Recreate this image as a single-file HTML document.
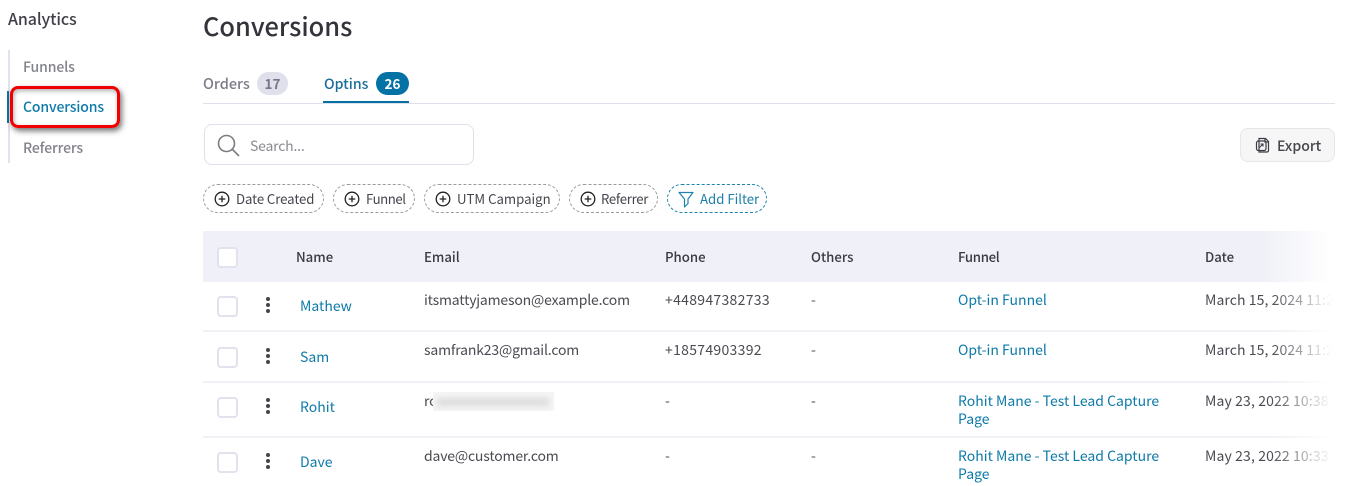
<!DOCTYPE html>
<html><head><meta charset="utf-8"><style>
html,body{margin:0;padding:0;background:#fff;width:1348px;height:486px;overflow:hidden}
body{position:relative;font-family:"Liberation Sans","Noto Sans CJK SC",sans-serif}
.t{position:absolute;white-space:nowrap;font-size:14px;line-height:20px;color:#4a4a52;font-family:"Noto Sans CJK SC","Liberation Sans",sans-serif}
.a{position:absolute}
.h{color:#3a3a42;font-size:13.2px;font-weight:500;top:247px}
.l{color:#0e7aa8}
.e{letter-spacing:-.17px}
.p{letter-spacing:.3px}
.c{font-size:13.2px;top:189px;color:#45454d}
.s{letter-spacing:-.12px;font-weight:500}
.cb{position:absolute;left:217px;width:17px;height:17px;border:2px solid #e2e2ee;border-radius:4px;background:#fff}
.sep{position:absolute;left:203px;width:1129px;height:2px;background:#f0f0f6}
.chip{position:absolute;top:184px;height:27px;border:1px dashed #9a9aa2;border-radius:15px;box-sizing:content-box}
.d{position:absolute;left:266px;width:4px;height:4px;border-radius:50%;background:#44444c}
</style></head><body>
<div class="t" style="left:8px;top:7px;font-size:16px;line-height:22px;color:#3f3f48;font-weight:500;letter-spacing:-.1px">Analytics</div>
<div class="a" style="left:8px;top:50px;width:2px;height:113px;background:#e2e2ee"></div>
<div class="a" style="left:7px;top:91px;width:2px;height:32px;background:#0e73a0"></div>
<div class="t s" style="left:23px;top:57px;color:#82828c">Funnels</div>
<div class="a" style="left:10px;top:86px;width:110px;height:42px;border:3.5px solid #f00000;border-radius:8px;box-shadow:2px 3px 6px rgba(0,0,0,.55),inset 1px 2px 5px rgba(0,0,0,.3);box-sizing:border-box"></div>
<div class="t s" style="left:23px;top:97px;color:#0e7aa8">Conversions</div>
<div class="t s" style="left:23px;top:138px;color:#82828c">Referrers</div>

<div class="t" style="left:203px;top:8px;font-size:25.4px;line-height:36px;color:#33333b;font-weight:500">Conversions</div>

<div class="t" style="left:203px;top:74px;font-size:14.5px;color:#7c7c88;font-weight:500">Orders</div>
<div class="a" style="left:257px;top:72px;width:31px;height:23px;border-radius:12px;background:#e0e0ec"></div>
<div class="t" style="left:257px;width:31px;text-align:center;top:73px;font-size:13.5px;color:#77778a;font-weight:700">17</div>
<div class="t" style="left:324px;top:74px;font-size:14.1px;color:#1a6f98;font-weight:500">Optins</div>
<div class="a" style="left:376px;top:72px;width:33px;height:23px;border-radius:12px;background:#0472a4"></div>
<div class="t" style="left:376px;width:33px;text-align:center;top:73px;font-size:13.5px;color:#fff;font-weight:700">26</div>
<div class="a" style="left:203px;top:103px;width:1132px;height:1px;background:#e0e0ea"></div>
<div class="a" style="left:323px;top:101px;width:86px;height:2px;background:#0472a4"></div>

<div class="a" style="left:204px;top:124px;width:270px;height:41px;box-sizing:border-box;border:1px solid #e0e0ec;border-radius:8px"></div>
<svg class="a" style="left:216px;top:133px" width="26" height="26" viewBox="0 0 26 26" fill="none" stroke="#7c7c84" stroke-width="1.6"><circle cx="10.5" cy="10.5" r="8"/><path d="M16.5 16.5L23 23"/></svg>
<div class="t" style="left:250px;top:136px;color:#8a8a92;letter-spacing:-.2px">Search...</div>

<div class="a" style="left:1240px;top:128px;width:95px;height:34px;box-sizing:border-box;border:1px solid #e6e6ea;border-radius:8px;background:#f6f6f6"></div>
<svg class="a" style="left:1254px;top:136px" width="18" height="18" viewBox="0 0 18 18" fill="none" stroke="#3c3c44" stroke-width="1.2"><path d="M5 2.5h6.5l3 3v9a1.5 1.5 0 0 1-1.5 1.5H5z"/><path d="M11 2.5v3.5h3.5"/><rect x="2.5" y="5" width="9.5" height="9.5" rx="2"/><path d="M5.5 11.5L9 8M6.5 8H9v2.5" stroke-width="1.1"/></svg>
<div class="t" style="left:1277px;top:136px;font-size:14.1px;color:#45454d;font-weight:500">Export</div>

<div class="chip" style="left:203px;width:119px"></div>
<div class="chip" style="left:333px;width:80px"></div>
<div class="chip" style="left:424px;width:134px"></div>
<div class="chip" style="left:569px;width:87px"></div>
<div class="chip" style="left:667px;width:98px;border-color:#1c83ad"></div>
<svg class="a" style="left:214px;top:191px" width="16" height="16" viewBox="0 0 16 16" fill="none" stroke="#222" stroke-width="1.3"><circle cx="8" cy="8" r="6.8"/><path d="M8 4.7v6.6M4.7 8h6.6"/></svg>
<svg class="a" style="left:344px;top:191px" width="16" height="16" viewBox="0 0 16 16" fill="none" stroke="#222" stroke-width="1.3"><circle cx="8" cy="8" r="6.8"/><path d="M8 4.7v6.6M4.7 8h6.6"/></svg>
<svg class="a" style="left:435px;top:191px" width="16" height="16" viewBox="0 0 16 16" fill="none" stroke="#222" stroke-width="1.3"><circle cx="8" cy="8" r="6.8"/><path d="M8 4.7v6.6M4.7 8h6.6"/></svg>
<svg class="a" style="left:580px;top:191px" width="16" height="16" viewBox="0 0 16 16" fill="none" stroke="#222" stroke-width="1.3"><circle cx="8" cy="8" r="6.8"/><path d="M8 4.7v6.6M4.7 8h6.6"/></svg>
<svg class="a" style="left:678px;top:191px" width="16" height="17" viewBox="0 0 16 17" fill="none" stroke="#1c83ad" stroke-width="1.2"><path d="M1 1.5h14L10 8v4.500L6.500 16V8z" stroke-linejoin="round"/></svg>
<div class="t c" style="left:236px;letter-spacing:-.08px">Date Created</div>
<div class="t c" style="left:366px;letter-spacing:-.45px">Funnel</div>
<div class="t c" style="left:457px">UTM Campaign</div>
<div class="t c" style="left:601px;font-size:13.2px;letter-spacing:-.3px">Referrer</div>
<div class="t c" style="left:700px;color:#1c7ea8">Add Filter</div>

<div class="a" style="left:203px;top:231px;width:1129px;height:51px;background:linear-gradient(90deg,#f0f1f8 0,#f0f1f8 94%,#fff 100%)"></div>
<div class="cb" style="top:247px;border-radius:4px"></div>
<div class="t h" style="left:296px">Name</div>
<div class="t h" style="left:424px">Email</div>
<div class="t h" style="left:665px">Phone</div>
<div class="t h" style="left:811px">Others</div>
<div class="t h" style="left:958px;letter-spacing:-.3px">Funnel</div>
<div class="t h" style="left:1205px">Date</div>

<div class="sep" style="top:330px"></div>
<div class="sep" style="top:381px"></div>
<div class="sep" style="top:436px"></div>

<div class="cb" style="top:296px"></div>
<div class="cb" style="top:347px"></div>
<div class="cb" style="top:397px"></div>
<div class="cb" style="top:452px"></div>

<div class="d" style="top:297px"></div><div class="d" style="top:303px"></div><div class="d" style="top:309px"></div>
<div class="d" style="top:348px"></div><div class="d" style="top:354px"></div><div class="d" style="top:360px"></div>
<div class="d" style="top:398px"></div><div class="d" style="top:404px"></div><div class="d" style="top:410px"></div>
<div class="d" style="top:453px"></div><div class="d" style="top:459px"></div><div class="d" style="top:465px"></div>

<div class="t l" style="left:300px;top:296px">Mathew</div>
<div class="t l" style="left:300px;top:347px">Sam</div>
<div class="t l" style="left:300px;top:397px">Rohit</div>
<div class="t l" style="left:300px;top:452px">Dave</div>

<div class="t e" style="left:424px;top:290px">itsmattyjameson@example.com</div>
<div class="t e" style="left:424px;top:340px">samfrank23@gmail.com</div>
<div class="t e" style="left:424px;top:391px">ro</div>
<div class="a" style="left:433px;top:392px;width:121px;height:19px;background:#f5f5f5;overflow:hidden"><div style="position:absolute;left:4px;top:6px;width:112px;height:8px;background:#dcdcdc;filter:blur(3px)"></div></div>
<div class="t e" style="left:424px;top:446px">dave@customer.com</div>

<div class="t p" style="left:665px;top:290px">+448947382733</div>
<div class="t p" style="left:665px;top:340px">+18574903392</div>
<div class="t" style="left:665px;top:391px">-</div>
<div class="t" style="left:665px;top:446px">-</div>

<div class="t" style="left:811px;top:290px">-</div>
<div class="t" style="left:811px;top:340px">-</div>
<div class="t" style="left:811px;top:391px">-</div>
<div class="t" style="left:811px;top:446px">-</div>

<div class="t l" style="left:958px;top:290px">Opt-in Funnel</div>
<div class="t l" style="left:958px;top:340px">Opt-in Funnel</div>
<div class="t l" style="left:958px;top:391px">Rohit Mane - Test Lead Capture</div>
<div class="t l" style="left:958px;top:409px">Page</div>
<div class="t l" style="left:958px;top:446px">Rohit Mane - Test Lead Capture</div>
<div class="t l" style="left:958px;top:464px">Page</div>

<div class="t" style="left:1205px;top:290px;letter-spacing:.08px">March 15, 2024 11:28</div>
<div class="t" style="left:1205px;top:340px;letter-spacing:.08px">March 15, 2024 11:28</div>
<div class="t" style="left:1205px;top:391px;letter-spacing:.12px">May 23, 2022 10:38</div>
<div class="t" style="left:1205px;top:446px;letter-spacing:.12px">May 23, 2022 10:33</div>
<div class="a" style="left:1270px;top:283px;width:62px;height:203px;background:linear-gradient(90deg,rgba(255,255,255,0),#fff)"></div>
<div class="a" style="left:1332px;top:283px;width:16px;height:203px;background:#fff"></div>
</body></html>
